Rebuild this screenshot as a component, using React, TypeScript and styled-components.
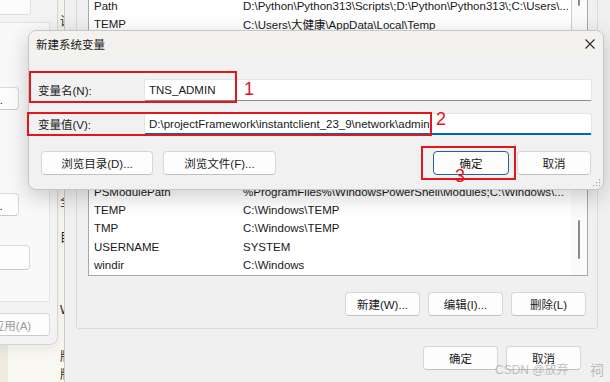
import React from "react";
import styled, { createGlobalStyle } from "styled-components";

const Global = createGlobalStyle`
  html, body { margin: 0; padding: 0; }
  body {
    width: 610px; height: 382px; overflow: hidden;
    font-family: "Liberation Sans", "Noto Sans CJK SC", sans-serif;
    font-size: 11.5px; color: #1a1a1a;
  }
  * { box-sizing: border-box; }
`;

const Desktop = styled.div`
  position: relative;
  width: 610px;
  height: 382px;
  overflow: hidden;
  background: linear-gradient(90deg, #efebdf 0 8px, #faf8f2 8px);
`;

/* ---------- Settings page (furthest back) ---------- */
const SettingsPage = styled.div`
  position: absolute;
  inset: 0;
  display: flex;
  flex-direction: column;
  padding-left: 60px;
`;
const SettingsLabel = styled.div<{ $gap: number }>`
  margin-top: ${(p) => p.$gap}px;
  font-size: 12px;
  line-height: 14px;
  white-space: nowrap;
  color: #1b1b1b;
`;

/* ---------- System properties window ---------- */
const SysWindow = styled.div`
  position: absolute;
  left: -202px;
  top: -30px;
  width: 260px;
  height: 375px;
  background: #f3f3f3;
  border: 1px solid #d4d4d4;
  border-radius: 8px;
  box-shadow: 0 4px 14px rgba(0, 0, 0, 0.08);
  display: flex;
  flex-direction: column;
  align-items: flex-end;
  padding-right: 7px;
`;
const TabStrip = styled.div`
  height: 51px;
  display: flex;
  align-items: flex-end;
  padding-right: 19px;
`;
const TabHead = styled.div`
  width: 70px;
  height: 30px;
  margin-bottom: 7px;
  background: #fbfbfb;
  border: 1px solid #dedede;
  border-radius: 4px;
`;
const TabPage = styled.div`
  width: 240px;
  height: 280px;
  background: #f9f9f9;
  border: 1px solid #e3e3e3;
  display: flex;
  flex-direction: column;
  align-items: flex-end;
  padding-right: 30px;
`;
const SysButton = styled.div<{ $gap: number; $w: number; $h?: number; $shift?: number; $muted?: boolean }>`
  margin-top: ${(p) => p.$gap}px;
  margin-right: ${(p) => p.$shift ?? 0}px;
  width: ${(p) => p.$w}px;
  height: ${(p) => p.$h ?? 23}px;
  background: #fdfdfd;
  border: 1px solid #d9d9d9;
  border-bottom-color: #c9c9c9;
  border-radius: 4px;
  display: flex;
  align-items: center;
  justify-content: center;
  white-space: nowrap;
  color: ${(p) => (p.$muted ? "#9a9a9a" : "#1a1a1a")};
`;

/* ---------- Environment variables window ---------- */
const EnvWindow = styled.div`
  position: absolute;
  left: 64px;
  top: -40px;
  width: 560px;
  height: 440px;
  background: #f0f0f0;
  border-left: 1px solid #c9c9c9;
  padding: 20px 0 0 11px;
  display: flex;
  flex-direction: column;
`;
const GroupBox = styled.div<{ $gap?: number }>`
  width: 522px;
  margin-top: ${(p) => p.$gap ?? 0}px;
  border: 1px solid #dadada;
  border-radius: 3px;
  padding: 12px 9px 12px 11px;
  display: flex;
  flex-direction: column;
`;
const ListView = styled.div<{ $h: number; $bottom?: boolean }>`
  position: relative;
  height: ${(p) => p.$h}px;
  background: #ffffff;
  border: 1px solid #a7a7a7;
  overflow: hidden;
  display: flex;
  flex-direction: column;
  justify-content: ${(p) => (p.$bottom ? "flex-end" : "flex-start")};
  padding: ${(p) => (p.$bottom ? "0 0 1px 0" : "3px 0 0 0")};
`;
const Row = styled.div`
  flex: none;
  height: 18.3px;
  display: grid;
  grid-template-columns: 149px 325px;
  align-items: center;
  padding-left: 5px;
  white-space: nowrap;
`;
const Cell = styled.span`
  overflow: hidden;
  white-space: nowrap;
`;
const ScrollTrack = styled.div<{ $edge?: boolean }>`
  position: absolute;
  top: 0;
  right: 0;
  bottom: 0;
  width: 16px;
  background: #fafafa;
  border-left: 1px solid ${(p) => (p.$edge ? "#cfcfcf" : "transparent")};
`;
const ScrollThumb = styled.div`
  position: absolute;
  left: 6px;
  width: 2px;
  border-radius: 1px;
  background: #8a8a8a;
`;
const ButtonRow = styled.div<{ $gap: number; $pad?: number }>`
  margin-top: ${(p) => p.$gap}px;
  padding-right: ${(p) => p.$pad ?? 0}px;
  display: flex;
  justify-content: flex-end;
  gap: 8px;
`;
const WinButton = styled.div<{ $w?: number; $default?: boolean }>`
  width: ${(p) => p.$w ?? 75}px;
  height: 24px;
  background: #fdfdfd;
  border: 1px solid ${(p) => (p.$default ? "#2d5e90" : "#d6d6d6")};
  border-bottom-color: ${(p) => (p.$default ? "#2d5e90" : "#c2c2c2")};
  border-radius: 4px;
  display: flex;
  align-items: center;
  justify-content: center;
  white-space: nowrap;
  font-size: 11.5px;
  color: #1a1a1a;
`;
const Footer = styled.div`
  width: 522px;
  margin-top: 17px;
  padding-right: 17px;
  display: flex;
  justify-content: flex-end;
  gap: 8px;
`;

/* ---------- New system variable dialog ---------- */
const Dialog = styled.div`
  position: absolute;
  left: 28px;
  top: 30px;
  width: 576px;
  height: 160px;
  border: 1px solid #c6c6c6;
  border-radius: 8px;
  background: #f1f1f1;
  box-shadow: 0 6px 22px rgba(0, 0, 0, 0.2);
  display: flex;
  flex-direction: column;
  overflow: hidden;
`;
const TitleBar = styled.div`
  height: 26px;
  display: flex;
  align-items: center;
  justify-content: space-between;
  padding-left: 7px;
  background: #f4f2ee;
`;
const Title = styled.span`
  font-size: 11.5px;
  color: #1a1a1a;
`;
const CloseBox = styled.div`
  width: 26px;
  height: 26px;
  display: flex;
  align-items: center;
  justify-content: center;
`;
const DialogBody = styled.div`
  flex: 1;
  padding: 22px 11px 0 9px;
  display: flex;
  flex-direction: column;
`;
const FieldGrid = styled.div`
  display: grid;
  grid-template-columns: 106px 1fr;
  row-gap: 12px;
  align-items: center;
`;
const FieldLabel = styled.span`
  font-size: 11.5px;
  white-space: nowrap;
`;
const TextBox = styled.div<{ $focus?: boolean }>`
  height: 22px;
  background: #ffffff;
  border: 1px solid #e4e4e4;
  border-bottom: ${(p) => (p.$focus ? "2px solid #0067c0" : "1px solid #8c8c8c")};
  border-radius: 3px 3px 2px 2px;
  padding-left: 4px;
  display: flex;
  align-items: center;
  white-space: nowrap;
  overflow: hidden;
  font-size: 11.5px;
`;
const DialogButtons = styled.div`
  margin-top: 16px;
  padding-left: 3px;
  padding-right: 1px;
  display: flex;
  align-items: center;
`;
const Gap = styled.div<{ $w?: number }>`
  flex: ${(p) => (p.$w ? "none" : "1")};
  width: ${(p) => p.$w ?? 0}px;
`;
const Grip = styled.svg`
  position: absolute;
  right: 2px;
  bottom: 2px;
`;

/* ---------- Annotations on top ---------- */
const Mark = styled.div`
  position: absolute;
  border: 2px solid #e3151e;
  pointer-events: none;
`;
const MarkNum = styled.span`
  position: absolute;
  font-family: "Liberation Sans", sans-serif;
  font-size: 18px;
  line-height: 18px;
  color: #e3151e;
`;
const Watermark = styled.span`
  position: absolute;
  font-size: 12px;
  line-height: 14px;
  color: rgba(150, 150, 150, 0.6);
  white-space: nowrap;
`;

const userRows = [
  ["Path", "D:\\Python\\Python313\\Scripts\\;D:\\Python\\Python313\\;C:\\Users\\..."],
  ["TEMP", "C:\\Users\\大健康\\AppData\\Local\\Temp"],
  ["TMP", "C:\\Users\\大健康\\AppData\\Local\\Temp"],
];

const systemRows = [
  ["OS", "Windows_NT"],
  ["Path", "C:\\Windows\\system32;C:\\Windows;..."],
  ["PATHEXT", ".COM;.EXE;.BAT;.CMD;.VBS;.VBE;.JS;.JSE;.WSF;.WSH;.MSC"],
  ["PROCESSOR_ARCHITECTURE", "AMD64"],
  ["PSModulePath", "%ProgramFiles%\\WindowsPowerShell\\Modules;C:\\Windows\\..."],
  ["TEMP", "C:\\Windows\\TEMP"],
  ["TMP", "C:\\Windows\\TEMP"],
  ["USERNAME", "SYSTEM"],
  ["windir", "C:\\Windows"],
];

const CloseIcon = () => (
  <svg width="12" height="12" viewBox="0 0 12 12">
    <path d="M1.5 1.5 L10.5 10.5 M10.5 1.5 L1.5 10.5" stroke="#2a2a2a" strokeWidth="1.1" />
  </svg>
);

export default function App() {
  return (
    <>
      <Global />
      <Desktop>
        <SettingsPage>
          <SettingsLabel $gap={15}>设备名称</SettingsLabel>
          <SettingsLabel $gap={166}>全名</SettingsLabel>
          <SettingsLabel $gap={22}>目标</SettingsLabel>
          <SettingsLabel $gap={58}>Windows 规格</SettingsLabel>
          <SettingsLabel $gap={33}>版本</SettingsLabel>
          <SettingsLabel $gap={4}>版本号</SettingsLabel>
        </SettingsPage>

        <SysWindow>
          <TabStrip>
            <TabHead />
          </TabStrip>
          <TabPage>
            <SysButton $gap={64} $w={80}>设置(S)...</SysButton>
            <SysButton $gap={83} $w={80}>设置(T)...</SysButton>
            <SysButton $gap={29} $w={160} $h={25} $shift={-11}>环境变量(N)...</SysButton>
          </TabPage>
          <SysButton $gap={11} $w={76} $muted>
            应用(A)
          </SysButton>
        </SysWindow>

        <EnvWindow>
          <GroupBox>
            <ListView $h={100}>
              {userRows.map(([n, v]) => (
                <Row key={n}>
                  <Cell>{n}</Cell>
                  <Cell>{v}</Cell>
                </Row>
              ))}
              <ScrollTrack $edge>
                <ScrollThumb style={{ top: 0, height: 12 }} />
              </ScrollTrack>
            </ListView>
            <ButtonRow $gap={16} $pad={2}>
              <WinButton>新建(N)...</WinButton>
              <WinButton>编辑(E)...</WinButton>
              <WinButton>删除(D)</WinButton>
            </ButtonRow>
          </GroupBox>
          <GroupBox $gap={4}>
            <ListView $h={113} $bottom>
              {systemRows.map(([n, v], i) => (
                <Row key={n + i}>
                  <Cell>{n}</Cell>
                  <Cell>{v}</Cell>
                </Row>
              ))}
              <ScrollTrack>
                <ScrollThumb style={{ top: 56, height: 39 }} />
              </ScrollTrack>
            </ListView>
            <ButtonRow $gap={16} $pad={2}>
              <WinButton>新建(W)...</WinButton>
              <WinButton>编辑(I)...</WinButton>
              <WinButton>删除(L)</WinButton>
            </ButtonRow>
          </GroupBox>
          <Footer>
            <WinButton>确定</WinButton>
            <WinButton>取消</WinButton>
          </Footer>
        </EnvWindow>

        <Dialog>
          <TitleBar>
            <Title>新建系统变量</Title>
            <CloseBox>
              <CloseIcon />
            </CloseBox>
          </TitleBar>
          <DialogBody>
            <FieldGrid>
              <FieldLabel>变量名(N):</FieldLabel>
              <TextBox>TNS_ADMIN</TextBox>
              <FieldLabel>变量值(V):</FieldLabel>
              <TextBox $focus>D:\projectFramework\instantclient_23_9\network\admin</TextBox>
            </FieldGrid>
            <DialogButtons>
              <WinButton $w={112}>浏览目录(D)...</WinButton>
              <Gap $w={10} />
              <WinButton $w={113}>浏览文件(F)...</WinButton>
              <Gap />
              <WinButton $w={76} $default>
                确定
              </WinButton>
              <Gap $w={8} />
              <WinButton $w={74}>取消</WinButton>
            </DialogButtons>
          </DialogBody>
          <Grip width="8" height="8" viewBox="0 0 8 8">
            <g fill="#a8a8a8">
              <rect x="6" y="0" width="1.2" height="1.2" />
              <rect x="3" y="3" width="1.2" height="1.2" />
              <rect x="6" y="3" width="1.2" height="1.2" />
              <rect x="0" y="6" width="1.2" height="1.2" />
              <rect x="3" y="6" width="1.2" height="1.2" />
              <rect x="6" y="6" width="1.2" height="1.2" />
            </g>
          </Grip>
        </Dialog>

        <Mark style={{ left: 29, top: 71, width: 208, height: 32 }} />
        <MarkNum style={{ left: 244, top: 80 }}>1</MarkNum>
        <Mark style={{ left: 27, top: 112, width: 405, height: 24 }} />
        <MarkNum style={{ left: 436, top: 110 }}>2</MarkNum>
        <Mark style={{ left: 421, top: 146, width: 95, height: 34 }} />
        <MarkNum style={{ left: 455, top: 167 }}>3</MarkNum>

        <Watermark style={{ left: 495, top: 363 }}>CSDN @放弃</Watermark>
        <Watermark style={{ left: 590, top: 363, fontSize: 14 }}>祠</Watermark>
      </Desktop>
    </>
  );
}
